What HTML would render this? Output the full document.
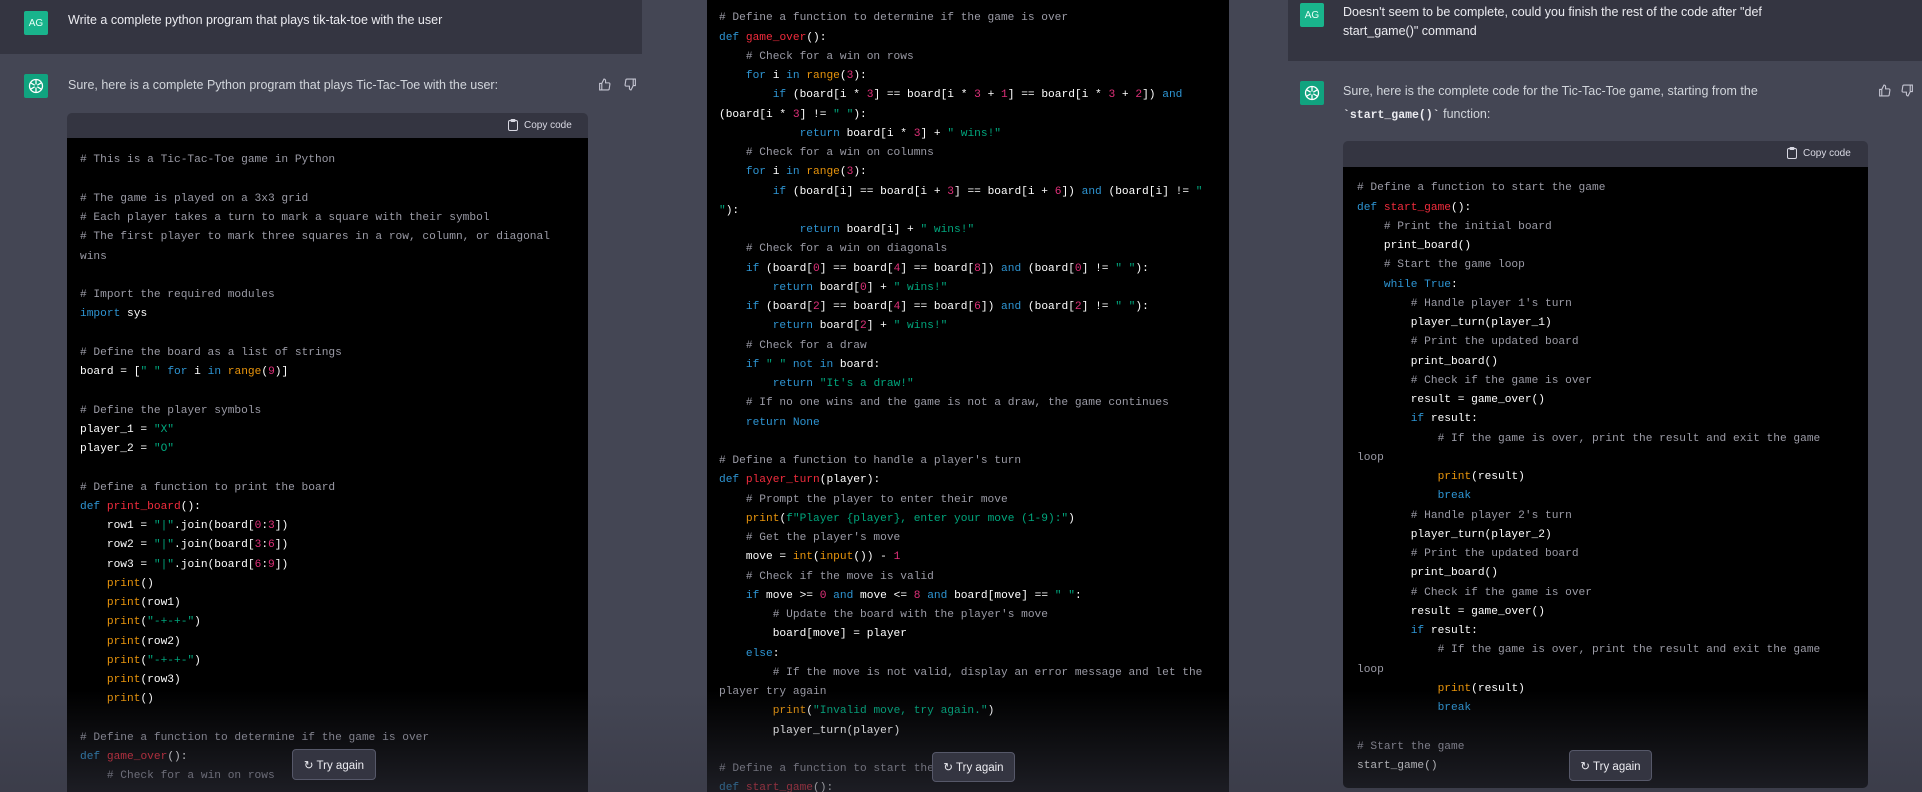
<!DOCTYPE html>
<html><head><meta charset="utf-8"><style>
*{margin:0;padding:0;box-sizing:border-box}
body{width:1922px;height:792px;background:#444654;position:relative;overflow:hidden;font-family:"Liberation Sans",sans-serif}
.abs{position:absolute}
.hdr{background:#343541}
.av{position:absolute;width:24px;height:24px;border-radius:2px;background:#19b48c;color:#e8fff6;font-size:10px;display:flex;align-items:center;justify-content:center}
.gpt{position:absolute;width:24px;height:24px;border-radius:2px;background:#10a37f}
.ut{position:absolute;color:#ececf1;font-size:12.5px;line-height:23px}
.rt{position:absolute;color:#d1d5db;font-size:12.5px;line-height:23px}
.code{position:absolute;background:#000;overflow:hidden}
pre{position:absolute;font-family:"Liberation Mono",monospace;font-size:11.2px;line-height:19.25px;color:#fff;white-space:pre}
.c{color:#9b9ba6}.k{color:#2e95d3}.f{color:#f22c3d}.b{color:#e9950c}.s{color:#00a67d}.n{color:#df3079}
.ch{position:absolute;background:#343541;border-radius:5px 5px 0 0}
.cc{position:absolute;color:#d9d9e3;font-size:10px;display:flex;align-items:center;gap:6px}
.try{position:absolute;background:#343541;border:1px solid #565869;border-radius:4px;color:#ececf1;font-size:11.5px;display:flex;align-items:center;justify-content:center;gap:6px}
.fade{position:absolute;left:0;right:0;top:690px;height:102px;background:linear-gradient(rgba(52,53,65,0),rgba(52,53,65,0.55))}
.th{position:absolute;width:13px;height:13px}
</style></head><body>

<!-- Panel 1 -->
<div class="abs hdr" style="left:0;top:0;width:642px;height:54px"></div>
<div class="av" style="left:24px;top:11px">AG</div>
<div class="ut" style="left:68px;top:9px">Write a complete python program that plays tik-tak-toe with the user</div>
<svg class="gpt" style="left:24px;top:74px" viewBox="0 0 24 24"><g fill="none" stroke="#fff" stroke-width="1.3"><circle cx="12" cy="12" r="6.5"/><path d="M12 5.5v5M17.6 8.7l-4.3 2.5M17.6 15.3l-4.3-2.5M12 18.5v-5M6.4 15.3l4.3-2.5M6.4 8.7l4.3 2.5"/></g></svg>
<div class="rt" style="left:68px;top:74px">Sure, here is a complete Python program that plays Tic-Tac-Toe with the user:</div>
<svg class="th" style="left:598px;top:78px" viewBox="0 0 24 24" fill="none" stroke="#c5c5d2" stroke-width="2"><path d="M7 10v12H3V10zM7 10l4-8a3 3 0 013 3v4h6a2 2 0 012 2.3l-1.4 9A2 2 0 0118.6 22H7"/></svg>
<svg class="th" style="left:624px;top:78px" viewBox="0 0 24 24" fill="none" stroke="#c5c5d2" stroke-width="2"><path d="M17 14V2h4v12zM17 14l-4 8a3 3 0 01-3-3v-4H4a2 2 0 01-2-2.3l1.4-9A2 2 0 015.4 2H17"/></svg>
<div class="ch" style="left:67px;top:113px;width:521px;height:25px"></div>
<div class="cc" style="left:508px;top:119px"><svg width="10" height="12" viewBox="0 0 10 12" fill="none" stroke="#d9d9e3"><rect x="0.5" y="1.5" width="9" height="10" rx="1.5"/><rect x="3" y="0.5" width="4" height="2" rx="0.5"/></svg>Copy code</div>
<div class="code" style="left:67px;top:138px;width:521px;height:654px">
<pre style="left:13px;top:13.4px"><span class="c"># This is a Tic-Tac-Toe game in Python</span>

<span class="c"># The game is played on a 3x3 grid</span>
<span class="c"># Each player takes a turn to mark a square with their symbol</span>
<span class="c"># The first player to mark three squares in a row, column, or diagonal</span>
<span class="c">wins</span>

<span class="c"># Import the required modules</span>
<span class="k">import</span> sys

<span class="c"># Define the board as a list of strings</span>
board = [<span class="s">" "</span> <span class="k">for</span> i <span class="k">in</span> <span class="b">range</span>(<span class="n">9</span>)]

<span class="c"># Define the player symbols</span>
player_1 = <span class="s">"X"</span>
player_2 = <span class="s">"O"</span>

<span class="c"># Define a function to print the board</span>
<span class="k">def</span> <span class="f">print_board</span>():
    row1 = <span class="s">"|"</span>.join(board[<span class="n">0</span>:<span class="n">3</span>])
    row2 = <span class="s">"|"</span>.join(board[<span class="n">3</span>:<span class="n">6</span>])
    row3 = <span class="s">"|"</span>.join(board[<span class="n">6</span>:<span class="n">9</span>])
    <span class="b">print</span>()
    <span class="b">print</span>(row1)
    <span class="b">print</span>(<span class="s">"-+-+-"</span>)
    <span class="b">print</span>(row2)
    <span class="b">print</span>(<span class="s">"-+-+-"</span>)
    <span class="b">print</span>(row3)
    <span class="b">print</span>()

<span class="c"># Define a function to determine if the game is over</span>
<span class="k">def</span> <span class="f">game_over</span>():
    <span class="c"># Check for a win on rows</span></pre>
</div>

<!-- Panel 2 -->
<div class="code" style="left:707px;top:0;width:522px;height:792px">
<pre style="left:12px;top:9.4px"><span class="c"># Define a function to determine if the game is over</span>
<span class="k">def</span> <span class="f">game_over</span>():
    <span class="c"># Check for a win on rows</span>
    <span class="k">for</span> i <span class="k">in</span> <span class="b">range</span>(<span class="n">3</span>):
        <span class="k">if</span> (board[i * <span class="n">3</span>] == board[i * <span class="n">3</span> + <span class="n">1</span>] == board[i * <span class="n">3</span> + <span class="n">2</span>]) <span class="k">and</span>
(board[i * <span class="n">3</span>] != <span class="s">" "</span>):
            <span class="k">return</span> board[i * <span class="n">3</span>] + <span class="s">" wins!"</span>
    <span class="c"># Check for a win on columns</span>
    <span class="k">for</span> i <span class="k">in</span> <span class="b">range</span>(<span class="n">3</span>):
        <span class="k">if</span> (board[i] == board[i + <span class="n">3</span>] == board[i + <span class="n">6</span>]) <span class="k">and</span> (board[i] != <span class="s">"</span>
<span class="s">"</span>):
            <span class="k">return</span> board[i] + <span class="s">" wins!"</span>
    <span class="c"># Check for a win on diagonals</span>
    <span class="k">if</span> (board[<span class="n">0</span>] == board[<span class="n">4</span>] == board[<span class="n">8</span>]) <span class="k">and</span> (board[<span class="n">0</span>] != <span class="s">" "</span>):
        <span class="k">return</span> board[<span class="n">0</span>] + <span class="s">" wins!"</span>
    <span class="k">if</span> (board[<span class="n">2</span>] == board[<span class="n">4</span>] == board[<span class="n">6</span>]) <span class="k">and</span> (board[<span class="n">2</span>] != <span class="s">" "</span>):
        <span class="k">return</span> board[<span class="n">2</span>] + <span class="s">" wins!"</span>
    <span class="c"># Check for a draw</span>
    <span class="k">if</span> <span class="s">" "</span> <span class="k">not in</span> board:
        <span class="k">return</span> <span class="s">"It's a draw!"</span>
    <span class="c"># If no one wins and the game is not a draw, the game continues</span>
    <span class="k">return None</span>

<span class="c"># Define a function to handle a player's turn</span>
<span class="k">def</span> <span class="f">player_turn</span>(player):
    <span class="c"># Prompt the player to enter their move</span>
    <span class="b">print</span>(<span class="s">f"Player {player}, enter your move (1-9):"</span>)
    <span class="c"># Get the player's move</span>
    move = <span class="b">int</span>(<span class="b">input</span>()) - <span class="n">1</span>
    <span class="c"># Check if the move is valid</span>
    <span class="k">if</span> move &gt;= <span class="n">0</span> <span class="k">and</span> move &lt;= <span class="n">8</span> <span class="k">and</span> board[move] == <span class="s">" "</span>:
        <span class="c"># Update the board with the player's move</span>
        board[move] = player
    <span class="k">else</span>:
        <span class="c"># If the move is not valid, display an error message and let the</span>
<span class="c">player try again</span>
        <span class="b">print</span>(<span class="s">"Invalid move, try again."</span>)
        player_turn(player)

<span class="c"># Define a function to start the game</span>
<span class="k">def</span> <span class="f">start_game</span>():</pre>
</div>

<!-- Panel 3 -->
<div class="abs hdr" style="left:1288px;top:0;width:634px;height:61px"></div>
<div class="av" style="left:1300px;top:3px">AG</div>
<div class="ut" style="left:1343px;top:3px;line-height:19px">Doesn't seem to be complete, could you finish the rest of the code after "def<br>start_game()" command</div>
<svg class="gpt" style="left:1300px;top:81px" viewBox="0 0 24 24"><g fill="none" stroke="#fff" stroke-width="1.3"><circle cx="12" cy="12" r="6.5"/><path d="M12 5.5v5M17.6 8.7l-4.3 2.5M17.6 15.3l-4.3-2.5M12 18.5v-5M6.4 15.3l4.3-2.5M6.4 8.7l4.3 2.5"/></g></svg>
<div class="rt" style="left:1343px;top:80px">Sure, here is the complete code for the Tic-Tac-Toe game, starting from the</div>
<div class="rt" style="left:1343px;top:103px"><b style="font-family:'Liberation Mono',monospace;font-size:11.5px;color:#ececf1">`start_game()`</b> function:</div>
<svg class="th" style="left:1878px;top:84px" viewBox="0 0 24 24" fill="none" stroke="#c5c5d2" stroke-width="2"><path d="M7 10v12H3V10zM7 10l4-8a3 3 0 013 3v4h6a2 2 0 012 2.3l-1.4 9A2 2 0 0118.6 22H7"/></svg>
<svg class="th" style="left:1901px;top:84px" viewBox="0 0 24 24" fill="none" stroke="#c5c5d2" stroke-width="2"><path d="M17 14V2h4v12zM17 14l-4 8a3 3 0 01-3-3v-4H4a2 2 0 01-2-2.3l1.4-9A2 2 0 015.4 2H17"/></svg>
<div class="ch" style="left:1343px;top:141px;width:525px;height:26px"></div>
<div class="cc" style="left:1787px;top:147px"><svg width="10" height="12" viewBox="0 0 10 12" fill="none" stroke="#d9d9e3"><rect x="0.5" y="1.5" width="9" height="10" rx="1.5"/><rect x="3" y="0.5" width="4" height="2" rx="0.5"/></svg>Copy code</div>
<div class="code" style="left:1343px;top:167px;width:525px;height:621px;border-radius:0 0 5px 5px">
<pre style="left:14px;top:12.4px"><span class="c"># Define a function to start the game</span>
<span class="k">def</span> <span class="f">start_game</span>():
    <span class="c"># Print the initial board</span>
    print_board()
    <span class="c"># Start the game loop</span>
    <span class="k">while True</span>:
        <span class="c"># Handle player 1's turn</span>
        player_turn(player_1)
        <span class="c"># Print the updated board</span>
        print_board()
        <span class="c"># Check if the game is over</span>
        result = game_over()
        <span class="k">if</span> result:
            <span class="c"># If the game is over, print the result and exit the game</span>
<span class="c">loop</span>
            <span class="b">print</span>(result)
            <span class="k">break</span>
        <span class="c"># Handle player 2's turn</span>
        player_turn(player_2)
        <span class="c"># Print the updated board</span>
        print_board()
        <span class="c"># Check if the game is over</span>
        result = game_over()
        <span class="k">if</span> result:
            <span class="c"># If the game is over, print the result and exit the game</span>
<span class="c">loop</span>
            <span class="b">print</span>(result)
            <span class="k">break</span>

<span class="c"># Start the game</span>
start_game()</pre>
</div>

<div class="fade"></div>
<div class="try" style="left:292px;top:749px;width:84px;height:31px">↻ Try again</div>
<div class="try" style="left:932px;top:752px;width:83px;height:30px">↻ Try again</div>
<div class="try" style="left:1569px;top:750px;width:83px;height:31px">↻ Try again</div>
</body></html>
